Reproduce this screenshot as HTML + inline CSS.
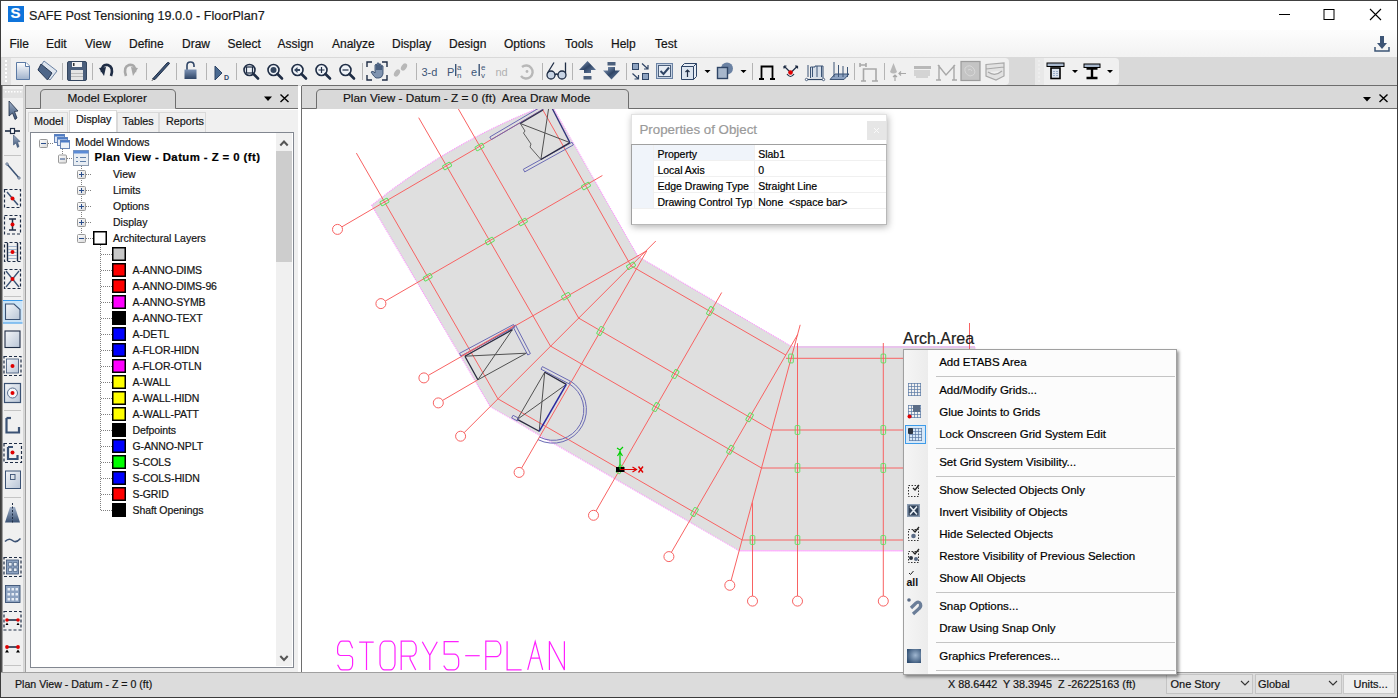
<!DOCTYPE html>
<html><head><meta charset="utf-8">
<style>
*{box-sizing:border-box}
html,body{margin:0;padding:0}
body{width:1398px;height:698px;position:relative;overflow:hidden;background:#d9d9d9;font-family:"Liberation Sans",sans-serif;color:#000}
.a{position:absolute}
.t{position:absolute;white-space:nowrap;line-height:1;-webkit-text-stroke:0.2px currentColor}
svg{position:absolute;overflow:visible}
</style></head><body>
<!-- title bar -->
<div class="a" style="left:0;top:0;width:1398px;height:30px;background:#fff"></div>
<div class="a" style="left:8px;top:6px;width:16px;height:16px;background:#0f74db"></div>
<div class="t" style="left:10.5px;top:5px;font-size:15px;font-weight:bold;color:#fff">S</div>
<div class="t" style="left:29px;top:10px;font-size:12.6px;color:#1a1a1a">SAFE Post Tensioning 19.0.0 - FloorPlan7</div>
<svg style="left:0;top:0" width="1398" height="30">
 <line x1="1279" y1="14.5" x2="1290" y2="14.5" stroke="#000" stroke-width="1"/>
 <rect x="1324" y="9.5" width="10" height="10" fill="none" stroke="#000"/>
 <path d="M1370 9 L1381 20 M1381 9 L1370 20" stroke="#000" stroke-width="1.1"/>
</svg>

<!-- menu bar -->
<div class="a" style="left:0;top:30px;width:1398px;height:27px;background:linear-gradient(#fdfdfd,#f2f2f2)"></div>
<div class="t" style="left:9.5px;top:38px;font-size:12px;color:#141414">File</div>
<div class="t" style="left:46px;top:38px;font-size:12px;color:#141414">Edit</div>
<div class="t" style="left:85px;top:38px;font-size:12px;color:#141414">View</div>
<div class="t" style="left:129px;top:38px;font-size:12px;color:#141414">Define</div>
<div class="t" style="left:182px;top:38px;font-size:12px;color:#141414">Draw</div>
<div class="t" style="left:227.5px;top:38px;font-size:12px;color:#141414">Select</div>
<div class="t" style="left:277.5px;top:38px;font-size:12px;color:#141414">Assign</div>
<div class="t" style="left:332px;top:38px;font-size:12px;color:#141414">Analyze</div>
<div class="t" style="left:392px;top:38px;font-size:12px;color:#141414">Display</div>
<div class="t" style="left:449px;top:38px;font-size:12px;color:#141414">Design</div>
<div class="t" style="left:504px;top:38px;font-size:12px;color:#141414">Options</div>
<div class="t" style="left:565px;top:38px;font-size:12px;color:#141414">Tools</div>
<div class="t" style="left:611px;top:38px;font-size:12px;color:#141414">Help</div>
<div class="t" style="left:655px;top:38px;font-size:12px;color:#141414">Test</div>
<svg style="left:0;top:0" width="1398" height="60">
 <path d="M1380 36 h4 v7 h3 l-5 6 l-5 -6 h3z" fill="#3d5576"/>
 <path d="M1375 47 v4 h14 v-4" fill="none" stroke="#3d5576" stroke-width="1.5"/>
</svg>

<!-- toolbar strip -->
<div class="a" style="left:0;top:58px;width:1398px;height:28px;background:#d9d9d9"></div>
<div class="a" style="left:2px;top:58px;width:1007px;height:27px;background:#f0f0f0;border-radius:0 4px 4px 0"></div>
<div class="a" style="left:1035px;top:58px;width:84px;height:27px;background:#f0f0f0;border-radius:0 4px 4px 0"></div>


<!-- left vertical toolbar -->
<div class="a" style="left:2px;top:86px;width:22px;height:586px;background:#f0f0f0"></div>
<!-- model explorer panel -->
<div class="a" style="left:25px;top:85px;width:273px;height:587px;background:#f0f0f0;border-left:1px solid #a0a0a0;border-top:1px solid #707070"></div>
<div class="a" style="left:26px;top:86px;width:272px;height:23px;background:#d9d9d9"></div><div class="a" style="left:26px;top:109px;width:272px;height:1px;background:#fff"></div>
<svg style="left:0;top:0" width="300" height="120">
 <path d="M26 108.5 H40.5 V94 Q40.5 89.5 45 89.5 H171 Q175.5 89.5 175.5 94 V108.5 H298" fill="#d9d9d9" stroke="#6e6e6e" stroke-width="1"/>
 <path d="M264 96.5 h8 l-4 4.5z" fill="#000"/>
 <path d="M280.5 94.5 l8 7.5 M288.5 94.5 l-8 7.5" stroke="#000" stroke-width="1.4"/>
</svg>
<div class="t" style="left:67.5px;top:93px;font-size:11.8px;color:#141414">Model Explorer</div>
<!-- subtabs -->
<div class="a" style="left:28px;top:112px;width:40px;height:20px;background:#f0f0f0;border:1px solid #d9d9d9;border-bottom:none"></div>
<div class="a" style="left:117px;top:112px;width:42px;height:20px;background:#f0f0f0;border:1px solid #d9d9d9;border-bottom:none"></div>
<div class="a" style="left:159px;top:112px;width:47px;height:20px;background:#f0f0f0;border:1px solid #d9d9d9;border-bottom:none"></div>
<div class="a" style="left:68.5px;top:110px;width:48.5px;height:22px;background:#fff;border:1px solid #d9d9d9;border-bottom:none"></div>
<div class="t" style="left:34px;top:115.5px;font-size:10.8px;color:#141414">Model</div>
<div class="t" style="left:76px;top:114px;font-size:10.8px;color:#141414">Display</div>
<div class="t" style="left:122.5px;top:115.5px;font-size:10.8px;color:#141414">Tables</div>
<div class="t" style="left:166px;top:115.5px;font-size:10.8px;color:#141414">Reports</div>
<!-- tree box -->
<div class="a" style="left:30px;top:132px;width:264px;height:536px;background:#fff;border:1px solid #828790"></div>
<div class="a" style="left:276px;top:133px;width:16px;height:533px;background:#f0f0f0"></div>
<div class="a" style="left:276px;top:151px;width:15.5px;height:111px;background:#cdcdcd"></div>
<svg style="left:0;top:0" width="300" height="700">
 <path d="M280.3 145.5 l3.7 -4 l3.7 4" fill="none" stroke="#555" stroke-width="2"/>
 <path d="M280.3 656 l3.7 4 l3.7 -4" fill="none" stroke="#555" stroke-width="2"/>
</svg>
<!-- plan view frame -->
<div class="a" style="left:298px;top:86px;width:3px;height:586px;background:#fff"></div>
<div class="a" style="left:301px;top:86px;width:1px;height:586px;background:#6e6e6e"></div>
<div class="a" style="left:302px;top:86px;width:1095px;height:23px;background:#d9d9d9"></div>
<div class="a" style="left:302px;top:109px;width:1095px;height:563px;background:#fff"></div>
<svg style="left:0;top:0" width="1398" height="120">
 <path d="M302 108.5 H316.5 V94 Q316.5 89.5 321 89.5 H624 Q628.5 89.5 628.5 94 V108.5 H1397" fill="#d9d9d9" stroke="#6e6e6e" stroke-width="1"/>
 <line x1="302" y1="85.5" x2="1397" y2="85.5" stroke="#6e6e6e"/>
 <path d="M1363 97 h8 l-4 4.5z" fill="#000"/>
 <path d="M1379.5 94.5 l8 7.5 M1387.5 94.5 l-8 7.5" stroke="#000" stroke-width="1.4"/>
</svg>
<div class="t" style="left:343px;top:93px;font-size:11.8px;color:#141414">Plan View - Datum - Z = 0 (ft)&nbsp; Area Draw Mode</div>

<!-- status bar -->
<div class="a" style="left:1px;top:672px;width:1396px;height:25px;background:#dcdcdc;border-top:1px solid #a0a0a0"></div>
<div class="t" style="left:15px;top:679px;font-size:10.6px;color:#141414">Plan View - Datum - Z = 0 (ft)</div>
<div class="t" style="left:948px;top:679px;font-size:10.8px;color:#141414">X 88.6442&nbsp; Y 38.3945&nbsp; Z -26225163 (ft)</div>
<div class="a" style="left:1166px;top:674px;width:87px;height:20px;background:#e1e1e1;border:1px solid #c4c4c4"></div>
<div class="a" style="left:1254.5px;top:674px;width:87px;height:20px;background:#e1e1e1;border:1px solid #c4c4c4"></div>
<div class="a" style="left:1343px;top:674px;width:52px;height:20px;background:#efefef;border:1px solid #c8c8c8"></div>
<div class="t" style="left:1170.5px;top:679px;font-size:11px;color:#141414">One Story</div>
<div class="t" style="left:1258px;top:679px;font-size:11px;color:#141414">Global</div>
<div class="t" style="left:1353.5px;top:679px;font-size:11px;color:#141414">Units...</div>
<svg style="left:0;top:0" width="1398" height="698">
 <path d="M1241 681 l4 4 l4 -4" fill="none" stroke="#333" stroke-width="1.1"/>
 <path d="M1329 681 l4 4 l4 -4" fill="none" stroke="#333" stroke-width="1.1"/>
</svg>

<!-- window borders -->
<div class="a" style="left:0;top:0;width:1398px;height:1px;background:#404040"></div>
<div class="a" style="left:0;top:0;width:1px;height:698px;background:#3c3c3c"></div>
<div class="a" style="left:1397px;top:0;width:1px;height:698px;background:#3c3c3c"></div>
<div class="a" style="left:0;top:697px;width:1398px;height:1px;background:#3c3c3c"></div><svg style="left:0;top:0" width="300" height="700"><g stroke="#808080" stroke-width="1" stroke-dasharray="1 1" fill="none"><path d="M48 143.5 H54 M62.5 149 V154 M67 158.5 H73 M81.5 166 V234 M86 174.5 H92 M86 190.5 H92 M86 206.5 H92 M86 222.5 H92 M86 238.5 H93 M100.5 245 V510"/><path d="M101 254.5 H112"/><path d="M101 270.5 H112"/><path d="M101 286.5 H112"/><path d="M101 302.5 H112"/><path d="M101 318.5 H112"/><path d="M101 334.5 H112"/><path d="M101 350.5 H112"/><path d="M101 366.5 H112"/><path d="M101 382.5 H112"/><path d="M101 398.5 H112"/><path d="M101 414.5 H112"/><path d="M101 430.5 H112"/><path d="M101 446.5 H112"/><path d="M101 462.5 H112"/><path d="M101 478.5 H112"/><path d="M101 494.5 H112"/><path d="M101 510.5 H112"/></g><defs><linearGradient id="eg" x1="0" y1="0" x2="1" y2="1"><stop offset="0" stop-color="#ffffff"/><stop offset="1" stop-color="#d8d8d8"/></linearGradient></defs><rect x="39.5" y="139.5" width="8" height="8" fill="url(#eg)" stroke="#9a9a9a" rx="1"/><path d="M41 143.5 H46" stroke="#2b4e8c" stroke-width="1"/><rect x="58.5" y="155.0" width="8" height="8" fill="url(#eg)" stroke="#9a9a9a" rx="1"/><path d="M60 159.0 H65" stroke="#2b4e8c" stroke-width="1"/><rect x="77.5" y="170.5" width="8" height="8" fill="url(#eg)" stroke="#9a9a9a" rx="1"/><path d="M79 174.5 H84" stroke="#2b4e8c" stroke-width="1"/><path d="M81.5 172 V177" stroke="#2b4e8c" stroke-width="1"/><rect x="77.5" y="186.5" width="8" height="8" fill="url(#eg)" stroke="#9a9a9a" rx="1"/><path d="M79 190.5 H84" stroke="#2b4e8c" stroke-width="1"/><path d="M81.5 188 V193" stroke="#2b4e8c" stroke-width="1"/><rect x="77.5" y="202.5" width="8" height="8" fill="url(#eg)" stroke="#9a9a9a" rx="1"/><path d="M79 206.5 H84" stroke="#2b4e8c" stroke-width="1"/><path d="M81.5 204 V209" stroke="#2b4e8c" stroke-width="1"/><rect x="77.5" y="218.5" width="8" height="8" fill="url(#eg)" stroke="#9a9a9a" rx="1"/><path d="M79 222.5 H84" stroke="#2b4e8c" stroke-width="1"/><path d="M81.5 220 V225" stroke="#2b4e8c" stroke-width="1"/><rect x="77.5" y="234.5" width="8" height="8" fill="url(#eg)" stroke="#9a9a9a" rx="1"/><path d="M79 238.5 H84" stroke="#2b4e8c" stroke-width="1"/><rect x="54.5" y="134.5" width="10" height="8" fill="#dfe8f5" stroke="#6a86b5"/><rect x="54.5" y="134.5" width="10" height="2" fill="#4d7cc8"/><rect x="57.5" y="137.5" width="10" height="8" fill="#e6edf7" stroke="#6a86b5"/><rect x="57.5" y="137.5" width="10" height="2" fill="#4d7cc8"/><rect x="60.5" y="140.5" width="9" height="8" fill="#eef2f8" stroke="#6a86b5"/><rect x="60.5" y="140.5" width="9" height="2" fill="#4d7cc8"/><rect x="73.5" y="150.5" width="15" height="15" fill="#e8edf3" stroke="#8c9bb0"/><rect x="73.5" y="150.5" width="15" height="3" fill="#5b8bd6"/><path d="M76 157.5 h2 M80 157.5 h6 M76 161.5 h2 M80 161.5 h6" stroke="#5f7fa8" stroke-width="1.2"/><rect x="93.75" y="231.75" width="12.5" height="12.5" fill="#fff" stroke="#000" stroke-width="1.5"/><rect x="112.75" y="247.75" width="12.5" height="12.5" fill="#c8c8c8" stroke="#000" stroke-width="1.5"/><rect x="112.75" y="263.75" width="12.5" height="12.5" fill="#ff0000" stroke="#000" stroke-width="1.5"/><rect x="112.75" y="279.75" width="12.5" height="12.5" fill="#ff0000" stroke="#000" stroke-width="1.5"/><rect x="112.75" y="295.75" width="12.5" height="12.5" fill="#ff00ff" stroke="#000" stroke-width="1.5"/><rect x="112.75" y="311.75" width="12.5" height="12.5" fill="#000000" stroke="#000" stroke-width="1.5"/><rect x="112.75" y="327.75" width="12.5" height="12.5" fill="#0000ff" stroke="#000" stroke-width="1.5"/><rect x="112.75" y="343.75" width="12.5" height="12.5" fill="#0000ff" stroke="#000" stroke-width="1.5"/><rect x="112.75" y="359.75" width="12.5" height="12.5" fill="#ff00ff" stroke="#000" stroke-width="1.5"/><rect x="112.75" y="375.75" width="12.5" height="12.5" fill="#ffff00" stroke="#000" stroke-width="1.5"/><rect x="112.75" y="391.75" width="12.5" height="12.5" fill="#ffff00" stroke="#000" stroke-width="1.5"/><rect x="112.75" y="407.75" width="12.5" height="12.5" fill="#ffff00" stroke="#000" stroke-width="1.5"/><rect x="112.75" y="423.75" width="12.5" height="12.5" fill="#000000" stroke="#000" stroke-width="1.5"/><rect x="112.75" y="439.75" width="12.5" height="12.5" fill="#0000ff" stroke="#000" stroke-width="1.5"/><rect x="112.75" y="455.75" width="12.5" height="12.5" fill="#00ff00" stroke="#000" stroke-width="1.5"/><rect x="112.75" y="471.75" width="12.5" height="12.5" fill="#0000ff" stroke="#000" stroke-width="1.5"/><rect x="112.75" y="487.75" width="12.5" height="12.5" fill="#ff0000" stroke="#000" stroke-width="1.5"/><rect x="112.75" y="503.75" width="12.5" height="12.5" fill="#000000" stroke="#000" stroke-width="1.5"/></svg>
<div class="t" style="left:75.30px;top:136.91px;font-size:10.5px;color:#141414;">Model Windows</div>
<div class="t" style="left:94.60px;top:152.25px;font-size:11.4px;color:#000;font-weight:bold;letter-spacing:0.42px;">Plan View - Datum - Z = 0 (ft)</div>
<div class="t" style="left:113.00px;top:168.91px;font-size:10.5px;color:#141414;">View</div>
<div class="t" style="left:113.00px;top:184.91px;font-size:10.5px;color:#141414;">Limits</div>
<div class="t" style="left:113.00px;top:200.91px;font-size:10.5px;color:#141414;">Options</div>
<div class="t" style="left:113.00px;top:216.91px;font-size:10.5px;color:#141414;">Display</div>
<div class="t" style="left:113.00px;top:232.91px;font-size:10.5px;color:#141414;">Architectural Layers</div>
<div class="t" style="left:132.50px;top:264.91px;font-size:10.5px;color:#141414;letter-spacing:-0.1px;">A-ANNO-DIMS</div>
<div class="t" style="left:132.50px;top:280.91px;font-size:10.5px;color:#141414;letter-spacing:-0.1px;">A-ANNO-DIMS-96</div>
<div class="t" style="left:132.50px;top:296.91px;font-size:10.5px;color:#141414;letter-spacing:-0.1px;">A-ANNO-SYMB</div>
<div class="t" style="left:132.50px;top:312.91px;font-size:10.5px;color:#141414;letter-spacing:-0.1px;">A-ANNO-TEXT</div>
<div class="t" style="left:132.50px;top:328.91px;font-size:10.5px;color:#141414;letter-spacing:-0.1px;">A-DETL</div>
<div class="t" style="left:132.50px;top:344.91px;font-size:10.5px;color:#141414;letter-spacing:-0.1px;">A-FLOR-HIDN</div>
<div class="t" style="left:132.50px;top:360.91px;font-size:10.5px;color:#141414;letter-spacing:-0.1px;">A-FLOR-OTLN</div>
<div class="t" style="left:132.50px;top:376.91px;font-size:10.5px;color:#141414;letter-spacing:-0.1px;">A-WALL</div>
<div class="t" style="left:132.50px;top:392.91px;font-size:10.5px;color:#141414;letter-spacing:-0.1px;">A-WALL-HIDN</div>
<div class="t" style="left:132.50px;top:408.91px;font-size:10.5px;color:#141414;letter-spacing:-0.1px;">A-WALL-PATT</div>
<div class="t" style="left:132.50px;top:424.91px;font-size:10.5px;color:#141414;letter-spacing:-0.1px;">Defpoints</div>
<div class="t" style="left:132.50px;top:440.91px;font-size:10.5px;color:#141414;letter-spacing:-0.1px;">G-ANNO-NPLT</div>
<div class="t" style="left:132.50px;top:456.91px;font-size:10.5px;color:#141414;letter-spacing:-0.1px;">S-COLS</div>
<div class="t" style="left:132.50px;top:472.91px;font-size:10.5px;color:#141414;letter-spacing:-0.1px;">S-COLS-HIDN</div>
<div class="t" style="left:132.50px;top:488.91px;font-size:10.5px;color:#141414;letter-spacing:-0.1px;">S-GRID</div>
<div class="t" style="left:132.50px;top:504.91px;font-size:10.5px;color:#141414;letter-spacing:-0.1px;">Shaft Openings</div>
<svg style="left:0;top:0" width="1398" height="90"><defs>
<linearGradient id="gdoc" x1="0" y1="0" x2="0" y2="1"><stop offset="0" stop-color="#ffffff"/><stop offset="1" stop-color="#9fb2cc"/></linearGradient>
<linearGradient id="gblue" x1="0" y1="0" x2="0" y2="1"><stop offset="0" stop-color="#7d93b5"/><stop offset="1" stop-color="#2f4566"/></linearGradient>
<linearGradient id="garr" x1="0" y1="0" x2="1" y2="1"><stop offset="0" stop-color="#8da2c0"/><stop offset="0.5" stop-color="#2f4566"/><stop offset="1" stop-color="#6f86a8"/></linearGradient>
</defs><rect x="2" y="58" width="9" height="27" fill="#e2e2e2"/><rect x="5" y="60" width="2" height="2" fill="#fff"/><rect x="5" y="64" width="2" height="2" fill="#fff"/><rect x="5" y="68" width="2" height="2" fill="#fff"/><rect x="5" y="72" width="2" height="2" fill="#fff"/><rect x="5" y="76" width="2" height="2" fill="#fff"/><rect x="5" y="80" width="2" height="2" fill="#fff"/><line x1="62.5" y1="63" x2="62.5" y2="80" stroke="#b4b4b4"/><line x1="92.5" y1="63" x2="92.5" y2="80" stroke="#b4b4b4"/><line x1="146.5" y1="63" x2="146.5" y2="80" stroke="#b4b4b4"/><line x1="176.5" y1="63" x2="176.5" y2="80" stroke="#b4b4b4"/><line x1="206.5" y1="63" x2="206.5" y2="80" stroke="#b4b4b4"/><line x1="236.5" y1="63" x2="236.5" y2="80" stroke="#b4b4b4"/><line x1="362.5" y1="63" x2="362.5" y2="80" stroke="#b4b4b4"/><line x1="416.5" y1="63" x2="416.5" y2="80" stroke="#b4b4b4"/><line x1="542.5" y1="63" x2="542.5" y2="80" stroke="#b4b4b4"/><line x1="572.5" y1="63" x2="572.5" y2="80" stroke="#b4b4b4"/><line x1="626.5" y1="63" x2="626.5" y2="80" stroke="#b4b4b4"/><line x1="752.5" y1="63" x2="752.5" y2="80" stroke="#b4b4b4"/><line x1="854.5" y1="63" x2="854.5" y2="80" stroke="#b4b4b4"/><line x1="884.5" y1="63" x2="884.5" y2="80" stroke="#b4b4b4"/><path d="M16.5 62.5 H26 L29.5 66 V79.5 H16.5Z" fill="url(#gdoc)" stroke="#5b7aa5"/><path d="M25.5 62.5 V66.5 H29.5" fill="#fff" stroke="#5b7aa5"/><path d="M38 70 L44 61 L57 71 L50 80Z" fill="#dfe6ef" stroke="#6b82a3"/><path d="M38 70 L41 64 L52 73 L47.5 80Z" fill="#4e6688" stroke="#2a3a55"/><rect x="67.5" y="61.5" width="19" height="19" rx="1.5" fill="#4b5f7c" stroke="#34465f"/><rect x="72" y="62" width="10" height="5" fill="#f4f4f4"/><rect x="73" y="63" width="1.5" height="3" fill="#333"/><rect x="71" y="70" width="12" height="10" fill="#e4e4e4"/><path d="M71 73.5 h12 M71 76.5 h12" stroke="#bbb"/><path d="M102 72 Q101 64 108 65 Q114 67 111 76" fill="none" stroke="#1f2d45" stroke-width="2.6"/><path d="M99 68 L104 76 L106 67Z" fill="#1f2d45"/><path d="M135 72 Q136 64 129 65 Q123 67 126 76" fill="none" stroke="#a8a8a8" stroke-width="2.6"/><path d="M138 68 L133 76 L131 67Z" fill="#a8a8a8"/><path d="M152.5 79 L167 63 Q169 61.5 169.5 63.5 L155 79.5Z" fill="#3d5576" stroke="#1f2d45"/><path d="M153 79.5 l-1 1.2" stroke="#222"/><path d="M187 70 V65.5 Q187 62 190.5 62 Q194 62 194 65.5 V67" fill="none" stroke="#2f4566" stroke-width="1.6"/><rect x="184.5" y="69.5" width="12" height="9.5" fill="url(#gblue)"/><path d="M215 66 L222 73 L215 80Z" fill="#4a6a91" stroke="#2f4566"/><text x="224" y="80" font-size="7" font-family="Liberation Sans" font-weight="bold" fill="#2f4566">D</text><circle cx="249.5" cy="70" r="5.5" fill="#eef2f7" stroke="#1f2d45" stroke-width="1.6"/><path d="M253.5 74 L258.0 78.5" stroke="#1f2d45" stroke-width="2.6" stroke-linecap="round"/><rect x="246.5" y="67" width="6" height="6" fill="none" stroke="#1f2d45" stroke-width="1.2"/><circle cx="273.5" cy="70" r="5.5" fill="#eef2f7" stroke="#1f2d45" stroke-width="1.6"/><path d="M277.5 74 L282.0 78.5" stroke="#1f2d45" stroke-width="2.6" stroke-linecap="round"/><circle cx="273.5" cy="70" r="3" fill="#34465f"/><circle cx="297.5" cy="70" r="5.5" fill="#eef2f7" stroke="#1f2d45" stroke-width="1.6"/><path d="M301.5 74 L306.0 78.5" stroke="#1f2d45" stroke-width="2.6" stroke-linecap="round"/><path d="M294 70 L297.5 67 V73Z M296 69 h4 v2 h-4z" fill="#34465f"/><circle cx="321.5" cy="70" r="5.5" fill="#eef2f7" stroke="#1f2d45" stroke-width="1.6"/><path d="M325.5 74 L330.0 78.5" stroke="#1f2d45" stroke-width="2.6" stroke-linecap="round"/><path d="M318.5 70 h6 M321.5 67 v6" stroke="#1f2d45" stroke-width="1.2"/><circle cx="345.5" cy="70" r="5.5" fill="#eef2f7" stroke="#1f2d45" stroke-width="1.6"/><path d="M349.5 74 L354.0 78.5" stroke="#1f2d45" stroke-width="2.6" stroke-linecap="round"/><path d="M342.5 70 h6" stroke="#1f2d45" stroke-width="1.2"/><path d="M367 67 V62 H372 M382 62 H387 V67 M387 75 V80 H382 M372 80 H367 V75" fill="none" stroke="#1f2d45" stroke-width="1.4"/><path d="M371 72 Q373 70 375 73 V65 Q376 63.5 377 65 V70 V63.5 Q378 62 379 63.5 V70 V64.5 Q380 63 381 64.5 V70 V66 Q382 65 383 66 V74 Q382 78 379 78 H376 Q374 77 371 72Z" fill="#8094b0" stroke="#2f4566" stroke-width="0.8"/><ellipse cx="397" cy="73" rx="2.5" ry="4" transform="rotate(35 397 73)" fill="#b8b8b8"/><ellipse cx="404" cy="67" rx="2.5" ry="4" transform="rotate(35 404 67)" fill="#b8b8b8"/><text x="421.5" y="76" font-size="11" font-family="Liberation Sans" fill="#3d5576">3-d</text><text x="447" y="76" font-size="11" font-family="Liberation Sans" fill="#3d5576">P</text><rect x="455" y="64" width="1.4" height="12" fill="#3d5576"/><text x="457" y="70" font-size="8" font-family="Liberation Sans" fill="#3d5576">a</text><text x="457" y="78" font-size="8" font-family="Liberation Sans" fill="#3d5576">n</text><text x="471" y="76" font-size="11" font-family="Liberation Sans" fill="#3d5576">e</text><rect x="478.5" y="64" width="1.4" height="12" fill="#3d5576"/><text x="481" y="70" font-size="8" font-family="Liberation Sans" fill="#3d5576">e</text><text x="481" y="78" font-size="8" font-family="Liberation Sans" fill="#3d5576">v</text><text x="495.5" y="76" font-size="11" font-family="Liberation Sans" fill="#b0b0b0">nd</text><path d="M522 67 A6.5 6.5 0 1 1 521 76" fill="none" stroke="#b8b8b8" stroke-width="2.4"/><circle cx="527" cy="71.5" r="1.4" fill="#b8b8b8"/><circle cx="551" cy="75" r="4" fill="#c8d4e4" stroke="#1f2d45" stroke-width="1.3"/><circle cx="562" cy="75" r="4" fill="#c8d4e4" stroke="#1f2d45" stroke-width="1.3"/><path d="M555 75 Q556.5 73 558 75 M547.5 73 L554 62.5 M565.5 73 V62.5" fill="none" stroke="#1f2d45" stroke-width="1.3"/><path d="M587.5 61 L596 70 H591 V73 H584 V70 H579Z" fill="url(#garr)"/><rect x="583.5" y="76" width="8" height="3.5" fill="#4b5f7c"/><rect x="607.5" y="62" width="8" height="3.5" fill="#4b5f7c"/><path d="M611.5 79.5 L603 70.5 H608 V67 H615 V70.5 H620Z" fill="url(#garr)"/><rect x="632.5" y="63.5" width="6" height="6" fill="#8da2c0" stroke="#2f4566"/><rect x="642.5" y="73.5" width="6" height="6" fill="#8da2c0" stroke="#2f4566"/><path d="M642 63.5 L648 69 M648 65 V69 H644 M632.5 73.5 L638.5 79 M634.5 79 H638.5 V75" fill="none" stroke="#2f4566" stroke-width="1.2"/><rect x="656.5" y="63.5" width="16" height="15" fill="#c6d3e4" stroke="#6b82a3"/><rect x="658.5" y="65.5" width="12" height="11" fill="#e7edf5" stroke="#4b5f7c"/><path d="M660.5 71 L663.5 74 L669 67.5" fill="none" stroke="#2f4566" stroke-width="2"/><path d="M681.5 66.5 L684.5 63.5 H696.5 V76.5 L693.5 79.5 H681.5Z" fill="#e7edf5" stroke="#2f4566"/><path d="M681.5 66.5 H693.5 V79.5 M693.5 66.5 L696.5 63.5" fill="none" stroke="#2f4566"/><rect x="682" y="67" width="11" height="12" fill="#dde5ef"/><path d="M687.5 77 V70 M685.5 72 L687.5 70 L689.5 72" fill="none" stroke="#1f2d45" stroke-width="1.2"/><path d="M704.5 70 h6 l-3 3z M740.5 70 h6 l-3 3z" fill="#000"/><circle cx="727" cy="68.5" r="6" fill="#6b82a3"/><rect x="717.5" y="67.5" width="10" height="11" fill="#a7b7cc" stroke="#2f4566" stroke-width="1.4"/><path d="M761.5 79 V66.5 H772.5 V79 M759 79 H764 M770 79 H775" fill="none" stroke="#000" stroke-width="1.8"/><path d="M784 66 L790.5 72.5 M797.5 66 L791 72.5 M784 66 h2.5 M784 66 v2.5 M797.5 66 h-2.5 M797.5 66 v2.5" stroke="#1f2d45" stroke-width="1.2" fill="none"/><path d="M787 74 Q790.5 79 794 74" fill="none" stroke="#1f2d45" stroke-width="1.2"/><circle cx="790.5" cy="72.5" r="2.3" fill="#e00000"/><path d="M806.5 79.5 H824" stroke="#2f4566" stroke-width="1.2"/><circle cx="806.5" cy="79.5" r="1.2" fill="#fff" stroke="#2f4566" stroke-width="0.8"/><circle cx="823.5" cy="79.5" r="1.2" fill="#fff" stroke="#2f4566" stroke-width="0.8"/><path d="M810.5 78 V67 H815 V66 H823 V78" fill="#d8e0ea" stroke="#3d5576"/><path d="M808 65 V77 M812.5 67 V77 M817 66 V77 M821.5 66 V77" stroke="#3d5576" stroke-width="1"/><path d="M830 79.5 L835 74 H849 L844 79.5Z" fill="#8da2c0" stroke="#3d5576"/><path d="M834 62 V77 M838.5 65 V77 M843 66 V77 M847.5 67 V77" stroke="#3d5576" stroke-width="1"/><path d="M861 81 H866 M872 81 H878 M863.5 81 V69 H876 V81 M860 63 V67 M860 65 H866 M866 63 V67" fill="none" stroke="#a8a8a8" stroke-width="1.6"/><path d="M893.5 63 L897 72 Q893.5 75 890 72Z" fill="#b8b8b8"/><path d="M895 81 V75 M893 77 L895 75 L897 77 M906 73.5 H899 M901 71.5 L899 73.5 L901 75.5" fill="none" stroke="#a8a8a8" stroke-width="1.2"/><rect x="914" y="66" width="17" height="3" fill="#b8b8b8"/><path d="M915 70 V76 M917 70 V78 M919 70 V78 M921 70 V78 M923 70 V78 M925 70 V78 M927 70 V78 M929 70 V76" stroke="#b8b8b8" stroke-width="1"/><path d="M938 65 L946 75 L955 65 M939 65 V80 M954 65 V80 M936 80 H941 M952 80 H957" fill="none" stroke="#a8a8a8" stroke-width="1.4"/><rect x="961" y="61.5" width="19" height="19" fill="#c4c4c4" stroke="#9c9c9c" stroke-width="1.2"/><path d="M965 68 Q970 63 974 69 Q977 75 970 76 Q964 74 965 68Z M968 70 Q971 68 972 71" fill="none" stroke="#d8d8d8" stroke-width="1"/><path d="M986 64.5 L1004 63 V76 L996 80 L986 76Z M986 69 L1004 67 M988 72 Q995 77 1002 71" fill="#e2e2e2" stroke="#a8a8a8" stroke-width="1.2"/><rect x="1038" y="60" width="2" height="2" fill="#fff"/><rect x="1038" y="64" width="2" height="2" fill="#fff"/><rect x="1038" y="68" width="2" height="2" fill="#fff"/><rect x="1038" y="72" width="2" height="2" fill="#fff"/><rect x="1038" y="76" width="2" height="2" fill="#fff"/><rect x="1038" y="80" width="2" height="2" fill="#fff"/><rect x="1035" y="58" width="9" height="27" fill="#e2e2e2" opacity="0.6"/><rect x="1047" y="63" width="17" height="3.5" fill="#a7b7cc" stroke="#000" stroke-width="1"/><rect x="1051" y="68" width="9" height="10.5" fill="#dce4ee" stroke="#000" stroke-width="1.6"/><path d="M1054 71 v5 M1057 71 v5" stroke="#5b7aa5" stroke-dasharray="1 1"/><path d="M1072 70 h6 l-3 3z M1107 70 h6 l-3 3z" fill="#000"/><rect x="1084" y="64" width="16" height="3.5" fill="#a7b7cc" stroke="#000"/><path d="M1092 68 V78 M1086.5 68.5 H1097.5 M1086.5 78 H1097.5" stroke="#000" stroke-width="2.4"/></svg>
<svg style="left:0;top:0" width="30" height="698"><defs><linearGradient id="lg1" x1="0" y1="0" x2="1" y2="1"><stop offset="0" stop-color="#f4f6f9"/><stop offset="1" stop-color="#b9c5d6"/></linearGradient>
<linearGradient id="lg2" x1="0" y1="0" x2="0" y2="1"><stop offset="0" stop-color="#9fb0c8"/><stop offset="1" stop-color="#3b5274"/></linearGradient></defs><rect x="1" y="85" width="1.5" height="587" fill="#505050"/><line x1="2" y1="85.5" x2="23" y2="85.5" stroke="#6e6e6e"/><rect x="23" y="86" width="1" height="586" fill="#d4d4d4"/><rect x="3" y="89" width="20" height="9" fill="#e2e2e2"/><rect x="5" y="91" width="1.5" height="1.5" fill="#fff"/><rect x="8" y="91" width="1.5" height="1.5" fill="#fff"/><rect x="11" y="91" width="1.5" height="1.5" fill="#fff"/><rect x="14" y="91" width="1.5" height="1.5" fill="#fff"/><rect x="17" y="91" width="1.5" height="1.5" fill="#fff"/><rect x="20" y="91" width="1.5" height="1.5" fill="#fff"/><line x1="4" y1="155.5" x2="21" y2="155.5" stroke="#c4c4c4"/><line x1="4" y1="296.5" x2="21" y2="296.5" stroke="#c4c4c4"/><line x1="4" y1="410.5" x2="21" y2="410.5" stroke="#c4c4c4"/><line x1="4" y1="497.5" x2="21" y2="497.5" stroke="#c4c4c4"/><line x1="4" y1="665.5" x2="21" y2="665.5" stroke="#c4c4c4"/><path d="M9 101 L18 111 L14.5 111.5 L17 118 L15 119.5 L12.5 113 L9 116Z" fill="url(#lg2)" stroke="#1f2d45" stroke-width="0.8"/><path d="M5 131 H20" stroke="#1f2d45" stroke-width="1.6"/><rect x="10.5" y="128.5" width="4" height="5" fill="#fff" stroke="#1f2d45" stroke-width="1.2"/><path d="M13.5 135 L20 141.5 L17.5 142 L19 146.5 L17.5 147.5 L16 143 L13.5 145Z" fill="url(#lg2)" stroke="#3b5274" stroke-width="0.6"/><path d="M7 164 L19 178" stroke="#3b5274" stroke-width="1.5"/><circle cx="7" cy="164" r="1.2" fill="#d0d8e4" stroke="#3b5274" stroke-width="0.7"/><circle cx="19" cy="178" r="1.2" fill="#d0d8e4" stroke="#3b5274" stroke-width="0.7"/><rect x="4.5" y="189.5" width="16.0" height="18.0" fill="none" stroke="#1f2d45" stroke-width="1.2" stroke-dasharray="3 2"/><path d="M7 192 L18 205" stroke="#3b5274" stroke-width="1.5"/><circle cx="12.5" cy="198.5" r="2" fill="#e00000"/><rect x="4.5" y="215.5" width="16.0" height="18.5" fill="none" stroke="#1f2d45" stroke-width="1.2" stroke-dasharray="3 2"/><path d="M9 219 H16 M12.5 219 V230 M9 230 H16" stroke="#1f2d45" stroke-width="1.5"/><circle cx="12.5" cy="224.5" r="2" fill="#e00000"/><rect x="4.5" y="242.5" width="16.0" height="19.0" fill="none" stroke="#1f2d45" stroke-width="1.2" stroke-dasharray="3 2"/><path d="M7.5 243 V261 M17.5 243 V261" stroke="#1f2d45" stroke-width="1.4"/><path d="M8 246.5 H17 M8 249.5 H17 M8 252.5 H17 M8 255.5 H17 M8 258.5 H17" stroke="#8da2c0" stroke-width="0.8"/><circle cx="12.5" cy="252" r="2" fill="#e00000"/><rect x="4.5" y="269.5" width="16.0" height="19.0" fill="none" stroke="#1f2d45" stroke-width="1.2" stroke-dasharray="3 2"/><path d="M6 271 L19 287 M19 271 L6 287" stroke="#3b5274" stroke-width="1.3"/><circle cx="12.5" cy="279" r="2" fill="#e00000"/><rect x="3" y="300" width="19.5" height="23.5" fill="#cce4f7"/><line x1="3" y1="300.5" x2="22.5" y2="300.5" stroke="#3d9be9"/><line x1="3" y1="323" x2="22.5" y2="323" stroke="#3d9be9"/><path d="M5.5 304 H14 L20 309.5 V319.5 H5.5Z" fill="url(#lg1)" stroke="#3b5274" stroke-width="1.1"/><rect x="5" y="331" width="15" height="16.5" fill="url(#lg1)" stroke="#1f2d45" stroke-width="1.1"/><rect x="4" y="356.5" width="17" height="19.0" fill="none" stroke="#1f2d45" stroke-width="1.2" stroke-dasharray="3 2"/><rect x="6.5" y="359" width="12" height="14" fill="url(#lg1)" stroke="#3b5274" stroke-width="0.8"/><circle cx="12.5" cy="366" r="2" fill="#e00000"/><rect x="4.5" y="383.5" width="16" height="19" fill="url(#lg1)" stroke="#3b5274" stroke-width="1.2"/><circle cx="12.5" cy="393" r="5" fill="#f4f6f9" stroke="#5a6f8f" stroke-width="1"/><circle cx="12.5" cy="393" r="2" fill="#e00000"/><path d="M6.5 418 V432.5 H19 V427" fill="none" stroke="#3b5274" stroke-width="2.2"/><path d="M6.5 418 H11" stroke="#3b5274" stroke-width="2.2"/><rect x="4" y="443.5" width="17.5" height="19.0" fill="none" stroke="#1f2d45" stroke-width="1.2" stroke-dasharray="3 2"/><path d="M8 447 V459 H17.5 V455 M8 447 H13" fill="none" stroke="#3b5274" stroke-width="2.2"/><circle cx="12.5" cy="452.5" r="2" fill="#e00000"/><rect x="5.5" y="471" width="15" height="17.5" fill="url(#lg1)" stroke="#3b5274" stroke-width="1"/><rect x="10.5" y="474.5" width="4.5" height="5" fill="none" stroke="#3b5274" stroke-width="0.9"/><path d="M10 507 H15 L20 522.5 H5Z" fill="url(#lg2)"/><path d="M12.5 503 V523" stroke="#1f2d45" stroke-dasharray="2 1.5" stroke-width="1"/><path d="M5 541.5 Q9 537.5 12.5 540.5 Q16 543.5 20.5 538.5" fill="none" stroke="#3b5274" stroke-width="1.6"/><rect x="4" y="557.5" width="17" height="19.0" fill="none" stroke="#1f2d45" stroke-width="1.2" stroke-dasharray="3 2"/><rect x="6.5" y="560" width="12" height="14" fill="#8da2c0" stroke="#3b5274" stroke-width="0.8"/><path d="M8.5 562.5 h3.5 v3.5 h-3.5z M13.5 562.5 h3.5 v3.5 h-3.5z M8.5 568 h3.5 v3.5 h-3.5z M13.5 568 h3.5 v3.5 h-3.5z" fill="#e7edf5" stroke="#3b5274" stroke-width="0.6"/><rect x="5.5" y="585.5" width="14.5" height="17" fill="#8da2c0" stroke="#3b5274" stroke-width="0.9"/><rect x="7.5" y="588" width="2.5" height="2.5" fill="#e7edf5"/><rect x="11.5" y="588" width="2.5" height="2.5" fill="#e7edf5"/><rect x="15.5" y="588" width="2.5" height="2.5" fill="#e7edf5"/><rect x="7.5" y="593" width="2.5" height="2.5" fill="#e7edf5"/><rect x="11.5" y="593" width="2.5" height="2.5" fill="#e7edf5"/><rect x="15.5" y="593" width="2.5" height="2.5" fill="#e7edf5"/><rect x="7.5" y="598" width="2.5" height="2.5" fill="#e7edf5"/><rect x="11.5" y="598" width="2.5" height="2.5" fill="#e7edf5"/><rect x="15.5" y="598" width="2.5" height="2.5" fill="#e7edf5"/><rect x="4" y="611.5" width="17" height="18.5" fill="none" stroke="#1f2d45" stroke-width="1.2" stroke-dasharray="3 2"/><path d="M7 620 H18" stroke="#1f2d45" stroke-width="1.6"/><circle cx="7" cy="620" r="1.8" fill="#e00000"/><circle cx="18" cy="620" r="1.8" fill="#e00000"/><path d="M5.5 625 L7 622.5 L8.5 625Z M16.5 625 L18 622.5 L19.5 625Z" fill="#000"/><path d="M7 647 H18" stroke="#1f2d45" stroke-width="1.6"/><circle cx="7" cy="647" r="1.9" fill="#e00000"/><circle cx="18" cy="647" r="1.9" fill="#e00000"/><path d="M5 652.5 L7 649.5 L9 652.5Z M16 652.5 L18 649.5 L20 652.5Z" fill="#000"/></svg>
<svg style="left:0;top:0" width="1398" height="698"><defs>
<clipPath id="cv"><rect x="302" y="109" width="1095" height="563"/></clipPath>
<pattern id="hatch" width="7" height="7" patternUnits="userSpaceOnUse" patternTransform="rotate(-33)"><rect width="7" height="7" fill="#dedede"/><line x1="0" y1="0.5" x2="7" y2="0.5" stroke="#e6e6e6" stroke-width="1"/></pattern>
</defs><g clip-path="url(#cv)"><polygon points="371.7,205.3 380.4,198.5 389.0,191.8 397.7,185.4 406.4,179.3 415.0,173.3 423.7,167.6 432.4,162.0 441.0,156.6 449.7,151.5 458.4,146.5 467.0,141.7 475.7,137.0 484.3,132.6 493.0,128.3 501.7,124.1 510.3,120.1 519.0,116.3 527.7,112.6 536.3,109.1 545.0,105.7 548.7,100 637.8,256.3 791.6,346.5 975,346.5 975,550.8 739.2,550.8 490.3,406.7" fill="#dfdfdf" stroke="#ff8cff" stroke-width="1.1" stroke-dasharray="1 1"/><line x1="797" y1="347" x2="975" y2="347" stroke="#e8c4ec" stroke-width="2"/><line x1="739" y1="550.8" x2="975" y2="550.8" stroke="#ffb0ff" stroke-width="1"/><path d="M356.4 153.1 L497.9 398.8 M418.7 117.7 L550.4 346 M458.4 109 L578.7 318.1 M542.3 109 L631 265.8 M341.82 226.88 L543.6 109 M385.23 301.1 L602.4 175.5 M428.24 375.42 L646.8 250.8 M442.62 400.38 L477.9 379.8 M464.14 432.66 L655.8 241 M521.6 468.07 L646.8 250.8 M595.99 510.97 L721.7 292.5 M671.41 552.27 L797.7 334.5 M731.1 580.47 L800.2 324.8 M631 265.8 L786 355.2 M578.7 318.1 L771.6 430 M550.4 346 L761.5 468 M497.9 398.8 L742.2 540 M797.5 596.1 L797.5 343.2 M883.3 596.1 L883.3 343 M752.5 596.1 L752.5 502.4 M969.5 323 L969.5 352 M786 358.3 L905 358.3 M771.6 430 L905 430 M761.5 468 L905 468 M742.2 540 L905 540" stroke="#f86262" stroke-width="1" fill="none"/><circle cx="337.5" cy="229.4" r="5" fill="#fff" stroke="#f86262" stroke-width="1"/><circle cx="380.9" cy="303.6" r="5" fill="#fff" stroke="#f86262" stroke-width="1"/><circle cx="423.9" cy="377.9" r="5" fill="#fff" stroke="#f86262" stroke-width="1"/><circle cx="438.3" cy="402.9" r="5" fill="#fff" stroke="#f86262" stroke-width="1"/><circle cx="460.6" cy="436.2" r="5" fill="#fff" stroke="#f86262" stroke-width="1"/><circle cx="519.1" cy="472.4" r="5" fill="#fff" stroke="#f86262" stroke-width="1"/><circle cx="593.5" cy="515.3" r="5" fill="#fff" stroke="#f86262" stroke-width="1"/><circle cx="668.9" cy="556.6" r="5" fill="#fff" stroke="#f86262" stroke-width="1"/><circle cx="729.8" cy="585.3" r="5" fill="#fff" stroke="#f86262" stroke-width="1"/><circle cx="752.5" cy="601.1" r="5" fill="#fff" stroke="#f86262" stroke-width="1"/><circle cx="797.5" cy="601.1" r="5" fill="#fff" stroke="#f86262" stroke-width="1"/><circle cx="883.3" cy="601.1" r="5" fill="#fff" stroke="#f86262" stroke-width="1"/><rect x="380.25" y="199.75" width="8.5" height="4.5" rx="0.9" fill="none" stroke="#58e058" stroke-width="0.9" transform="rotate(-30 384.5 202)"/><rect x="442.85" y="163.75" width="8.5" height="4.5" rx="0.9" fill="none" stroke="#58e058" stroke-width="0.9" transform="rotate(-30 447.1 166)"/><rect x="475.25" y="144.85" width="8.5" height="4.5" rx="0.9" fill="none" stroke="#58e058" stroke-width="0.9" transform="rotate(-30 479.5 147.1)"/><rect x="423.45" y="275.05" width="8.5" height="4.5" rx="0.9" fill="none" stroke="#58e058" stroke-width="0.9" transform="rotate(-30 427.7 277.3)"/><rect x="485.55" y="238.65" width="8.5" height="4.5" rx="0.9" fill="none" stroke="#58e058" stroke-width="0.9" transform="rotate(-30 489.8 240.9)"/><rect x="518.65" y="219.65" width="8.5" height="4.5" rx="0.9" fill="none" stroke="#58e058" stroke-width="0.9" transform="rotate(-30 522.9 221.9)"/><rect x="581.75" y="183.75" width="8.5" height="4.5" rx="0.9" fill="none" stroke="#58e058" stroke-width="0.9" transform="rotate(-30 586 186)"/><rect x="561.85" y="293.95" width="8.5" height="4.5" rx="0.9" fill="none" stroke="#58e058" stroke-width="0.9" transform="rotate(-30 566.1 296.2)"/><rect x="626.75" y="263.55" width="8.5" height="4.5" rx="0.9" fill="none" stroke="#58e058" stroke-width="0.9" transform="rotate(-30 631 265.8)"/><rect x="596.25" y="328.65" width="8.5" height="4.5" rx="0.9" fill="none" stroke="#58e058" stroke-width="0.9" transform="rotate(-60 600.5 330.9)"/><rect x="706.05" y="308.85" width="8.5" height="4.5" rx="0.9" fill="none" stroke="#58e058" stroke-width="0.9" transform="rotate(-60 710.3 311.1)"/><rect x="671.05" y="371.85" width="8.5" height="4.5" rx="0.9" fill="none" stroke="#58e058" stroke-width="0.9" transform="rotate(-60 675.3 374.1)"/><rect x="651.55" y="404.85" width="8.5" height="4.5" rx="0.9" fill="none" stroke="#58e058" stroke-width="0.9" transform="rotate(-60 655.8 407.1)"/><rect x="745.35" y="415.05" width="8.5" height="4.5" rx="0.9" fill="none" stroke="#58e058" stroke-width="0.9" transform="rotate(-60 749.6 417.3)"/><rect x="726.15" y="447.55" width="8.5" height="4.5" rx="0.9" fill="none" stroke="#58e058" stroke-width="0.9" transform="rotate(-60 730.4 449.8)"/><rect x="690.25" y="509.65" width="8.5" height="4.5" rx="0.9" fill="none" stroke="#58e058" stroke-width="0.9" transform="rotate(-60 694.5 511.9)"/><rect x="615.55" y="467.05" width="8.5" height="4.5" rx="0.9" fill="none" stroke="#58e058" stroke-width="0.9" transform="rotate(-60 619.8 469.3)"/><rect x="788.7" y="354.1" width="4.6" height="8.8" rx="0.9" fill="none" stroke="#58e058" stroke-width="0.9" transform="rotate(0 791 358.5)"/><rect x="881.1" y="354.1" width="4.6" height="8.8" rx="0.9" fill="none" stroke="#58e058" stroke-width="0.9" transform="rotate(0 883.4 358.5)"/><rect x="795.2" y="425.6" width="4.6" height="8.8" rx="0.9" fill="none" stroke="#58e058" stroke-width="0.9" transform="rotate(0 797.5 430)"/><rect x="881.0" y="425.6" width="4.6" height="8.8" rx="0.9" fill="none" stroke="#58e058" stroke-width="0.9" transform="rotate(0 883.3 430)"/><rect x="795.2" y="463.6" width="4.6" height="8.8" rx="0.9" fill="none" stroke="#58e058" stroke-width="0.9" transform="rotate(0 797.5 468)"/><rect x="881.0" y="463.6" width="4.6" height="8.8" rx="0.9" fill="none" stroke="#58e058" stroke-width="0.9" transform="rotate(0 883.3 468)"/><rect x="750.2" y="535.6" width="4.6" height="8.8" rx="0.9" fill="none" stroke="#58e058" stroke-width="0.9" transform="rotate(0 752.5 540)"/><rect x="795.2" y="535.6" width="4.6" height="8.8" rx="0.9" fill="none" stroke="#58e058" stroke-width="0.9" transform="rotate(0 797.5 540)"/><rect x="881.0" y="535.6" width="4.6" height="8.8" rx="0.9" fill="none" stroke="#58e058" stroke-width="0.9" transform="rotate(0 883.3 540)"/><path d="M491.4 139.6 L548.8 105.8 L547.2 103.2 L489.8 137.0Z" fill="none" stroke="#6a6ab4" stroke-width="1" stroke-linejoin="round"/><path d="M524.7 171.9 L573.4 144.9 L572.0 142.3 L523.3 169.3Z" fill="none" stroke="#6a6ab4" stroke-width="1" stroke-linejoin="round"/><path d="M520.3 123.5 L569.9 142.6 M540.9 159.5 L549.3 104" stroke="#505050" stroke-width="1" fill="none"/><path d="M520.3 123.5 L525 131 L523.5 133 L531 144 L530 147 L540.9 159.5" stroke="#606060" stroke-width="1" fill="none"/><path d="M540.9 159.5 L569.9 142.6" stroke="#2a2a40" stroke-width="1.3"/><path d="M552 108 L569.9 142.6" stroke="#30307a" stroke-width="1.3"/><path d="M520.3 123.5 L543 110" stroke="#30304a" stroke-width="1.2"/><path d="M460.9 356.0 L514.9 327.1 L513.5 324.5 L459.5 353.4Z" fill="none" stroke="#6a6ab4" stroke-width="1" stroke-linejoin="round"/><path d="M512.9 326.5 L527.8 355.0 L530.4 353.6 L515.5 325.1Z" fill="none" stroke="#6a6ab4" stroke-width="1" stroke-linejoin="round"/><path d="M464.9 356.2 L526.3 353.2 M512.4 329.6 L477.9 379.8 M477.9 379.8 L526.3 353.2" stroke="#505050" stroke-width="1" fill="none"/><path d="M464.9 356.2 L512.4 329.6 M464.9 356.2 L477.9 379.8" stroke="#2a2a40" stroke-width="1.3" fill="none"/><path d="M461.5 356 L514.6 325.5" stroke="#f86262" stroke-width="1"/><path d="M541.0 369.2 L569.0 383.8 L570.4 381.2 L542.4 366.6Z" fill="none" stroke="#6a6ab4" stroke-width="1" stroke-linejoin="round"/><path d="M544.7 372.2 L539.2 431.3 M566.3 384.4 L517.3 419.4 M517.3 419.4 L544.7 372.2" stroke="#505050" stroke-width="1" fill="none"/><path d="M544.7 372.2 L566.3 384.4 M517.3 419.4 L539.2 431.3" stroke="#2a2a40" stroke-width="1.3" fill="none"/><path d="M566.3 384.4 L539.2 431.3" stroke="#2828a0" stroke-width="1.5"/><path d="M511.7 417.9 L517.3 420.9 L518.7 418.3 L513.1 415.3Z" fill="none" stroke="#6a6ab4" stroke-width="1" stroke-linejoin="round"/><path d="M569.0 383.7 A30.5 30.5 0 0 1 539.4 437.0" fill="none" stroke="#6a6ab4" stroke-width="1"/><path d="M570.6 381.2 A33.5 33.5 0 0 1 538.1 439.7" fill="none" stroke="#6a6ab4" stroke-width="1"/><rect x="616" y="467" width="8.5" height="5" fill="#000"/><path d="M620 469.5 V453 M617.5 456 L620 452 L622.5 456" stroke="#00d000" stroke-width="1.2" fill="none"/><path d="M617 448 L620 450 L623 447 M620 450 V452" stroke="#00d000" stroke-width="1.2" fill="none"/><path d="M620 469.5 H636 M632.5 467 L636.5 469.5 L632.5 472" stroke="#e00000" stroke-width="1.2" fill="none"/><path d="M638.5 466.5 L643 472.5 M643 466.5 L638.5 472.5" stroke="#e00000" stroke-width="1.4" fill="none"/></g><g fill="none" stroke="#ff20ff" stroke-width="1.2"><path transform="translate(337.6 641.2)" d="M15 7 L12.5 1 Q11.8 0 10.5 0 H4.5 Q3 0 2 1.2 L0.8 3.5 Q0 5 0 7 V11 Q0 12.5 1.2 13.5 L2.5 14.3 H12 L14 15.5 Q15 16.5 15 18 V23 Q15 25 14 26.5 L13 27.8 Q12 28.7 10.5 28.7 H4.5 Q3 28.7 2.3 27.7 L0 23.5"/><path transform="translate(359.2 641.2)" d="M0 1 H14.5 M7.3 1 V28.7"/><path transform="translate(380 641.2)" d="M4.5 0 H10.5 Q12 0 13 1.3 L14.2 3 Q15 4.5 15 6.5 V22 Q15 24 14.2 25.5 L13 27.4 Q12 28.7 10.5 28.7 H4.5 Q3 28.7 2 27.4 L0.8 25.5 Q0 24 0 22 V6.5 Q0 4.5 0.8 3 L2 1.3 Q3 0 4.5 0Z"/><path transform="translate(401.2 641.2)" d="M0 28.7 V0 H10.5 Q12 0 13 1.3 L14.2 3 Q15 4.5 15 6.5 V9 Q15 11 14.2 12.5 L13 14 Q12 15 10.5 15 H0 M9 15 Q8.5 16 9 18 L14.5 28.7"/><path transform="translate(422.3 641.2)" d="M0 0.5 L7.5 14 L15 0.5 M7.5 14 V28.7"/><path transform="translate(443.7 641.2)" d="M15 0.5 H0.5 V13 H10.5 Q12 13 13 14 L14.2 15.5 Q15 17 15 19 V22.5 Q15 24.5 14.2 26 L13 27.5 Q12 28.7 10.5 28.7 H4.5 Q3 28.7 2.2 27.7 L0 24.5"/><path transform="translate(465.2 641.2)" d="M0 14.5 H14.5"/><path transform="translate(485.8 641.2)" d="M0 28.7 V0 H10.5 Q12 0 13 1.3 L14.2 3 Q15 4.5 15 6.5 V9.5 Q15 11.5 14.2 13 L13 14.5 Q12 15.5 10.5 15.5 H0"/><path transform="translate(507.1 641.2)" d="M0 0 V28.7 H14.5"/><path transform="translate(527.7 641.2)" d="M0 28.7 L7.5 0.3 L15 28.7 M3 17 H12"/><path transform="translate(549.4 641.2)" d="M0 28.7 V0 L15 28.7 V0"/></g></svg>
<div class="a" style="left:631px;top:114px;width:256px;height:111px;background:#fff;border:1px solid #e2e2e2;box-shadow:1px 2px 7px rgba(0,0,0,0.3)"></div><div class="t" style="left:639.50px;top:122.74px;font-size:13.3px;color:#9a9a9a;">Properties of Object</div>
<div class="a" style="left:867px;top:121px;width:19px;height:19px;background:#e6e6e6"></div><svg style="left:0;top:0" width="900" height="240"><path d="M874 128 l5 5 M879 128 l-5 5" stroke="#fafafa" stroke-width="1"/></svg><div class="a" style="left:631px;top:144px;width:256px;height:81px;background:#fff;border-top:1px solid #a0a0a0;border-left:1px solid #a0a0a0;border-right:1px solid #b8b8b8;border-bottom:1px solid #b8b8b8"></div><div class="a" style="left:632px;top:145px;width:21px;height:64px;background:#f0f4fa"></div><div class="a" style="left:653px;top:145px;width:101px;height:15px;background:#f0f4fa"></div><svg style="left:0;top:0" width="900" height="240"><g stroke="#f0f0f0" stroke-width="1"><path d="M653 160.5 H886 M653 176.5 H886 M653 192.5 H886 M633 208.5 H886 M653.5 145 V209 M754.5 145 V209"/></g></svg><div class="t" style="left:657.40px;top:148.61px;font-size:10.5px;color:#000;">Property</div>
<div class="t" style="left:758.20px;top:148.61px;font-size:10.5px;color:#000;">Slab1</div>
<div class="t" style="left:657.40px;top:164.61px;font-size:10.5px;color:#000;">Local Axis</div>
<div class="t" style="left:758.20px;top:164.61px;font-size:10.5px;color:#000;">0</div>
<div class="t" style="left:657.40px;top:180.61px;font-size:10.5px;color:#000;">Edge Drawing Type</div>
<div class="t" style="left:758.20px;top:180.61px;font-size:10.5px;color:#000;">Straight Line</div>
<div class="t" style="left:657.40px;top:196.61px;font-size:10.5px;color:#000;">Drawing Control Typ</div>
<div class="t" style="left:758.20px;top:196.61px;font-size:10.5px;color:#000;">None&nbsp; &lt;space bar&gt;</div>
<div class="t" style="left:903.00px;top:331.16px;font-size:16px;color:#202020;">Arch.Area</div>
<div class="a" style="left:903px;top:349px;width:274px;height:326px;background:#fcfcfc;border:1px solid #a0a0a0;box-shadow:2px 2px 3px rgba(0,0,0,0.42)"></div><div class="a" style="left:904px;top:350px;width:24px;height:324px;background:linear-gradient(90deg,#f5f5f5,#ececec)"></div><div class="t" style="left:939.20px;top:356.97px;font-size:11.5px;color:#000;">Add ETABS Area</div>
<div class="t" style="left:939.20px;top:384.97px;font-size:11.5px;color:#000;">Add/Modify Grids...</div>
<div class="t" style="left:939.20px;top:406.97px;font-size:11.5px;color:#000;">Glue Joints to Grids</div>
<div class="t" style="left:939.20px;top:428.97px;font-size:11.5px;color:#000;">Lock Onscreen Grid System Edit</div>
<div class="t" style="left:939.20px;top:456.97px;font-size:11.5px;color:#000;">Set Grid System Visibility...</div>
<div class="t" style="left:939.20px;top:485.37px;font-size:11.5px;color:#000;">Show Selected Objects Only</div>
<div class="t" style="left:939.20px;top:506.97px;font-size:11.5px;color:#000;">Invert Visibility of Objects</div>
<div class="t" style="left:939.20px;top:528.97px;font-size:11.5px;color:#000;">Hide Selected Objects</div>
<div class="t" style="left:939.20px;top:550.97px;font-size:11.5px;color:#000;">Restore Visibility of Previous Selection</div>
<div class="t" style="left:939.20px;top:572.97px;font-size:11.5px;color:#000;">Show All Objects</div>
<div class="t" style="left:939.20px;top:600.97px;font-size:11.5px;color:#000;">Snap Options...</div>
<div class="t" style="left:939.20px;top:622.97px;font-size:11.5px;color:#000;">Draw Using Snap Only</div>
<div class="t" style="left:939.20px;top:650.97px;font-size:11.5px;color:#000;">Graphics Preferences...</div>
<svg style="left:0;top:0" width="1398" height="698"><line x1="936" y1="376.5" x2="1175" y2="376.5" stroke="#c4c4c4"/><line x1="936" y1="448.5" x2="1175" y2="448.5" stroke="#c4c4c4"/><line x1="936" y1="476.5" x2="1175" y2="476.5" stroke="#c4c4c4"/><line x1="936" y1="592.5" x2="1175" y2="592.5" stroke="#c4c4c4"/><line x1="936" y1="642.5" x2="1175" y2="642.5" stroke="#c4c4c4"/><line x1="936" y1="670.5" x2="1175" y2="670.5" stroke="#c4c4c4"/><line x1="908.5" y1="383" x2="908.5" y2="396" stroke="#5b7aa5" stroke-width="1" opacity="0.7"/><line x1="911.5" y1="383" x2="911.5" y2="396" stroke="#5b7aa5" stroke-width="1" opacity="0.7"/><line x1="914.5" y1="383" x2="914.5" y2="396" stroke="#5b7aa5" stroke-width="1" opacity="0.7"/><line x1="917.5" y1="383" x2="917.5" y2="396" stroke="#5b7aa5" stroke-width="1" opacity="0.7"/><line x1="920.5" y1="383" x2="920.5" y2="396" stroke="#5b7aa5" stroke-width="1" opacity="0.7"/><line x1="908" y1="383.5" x2="921" y2="383.5" stroke="#5b7aa5" stroke-width="1" opacity="0.7"/><line x1="908" y1="386.5" x2="921" y2="386.5" stroke="#5b7aa5" stroke-width="1" opacity="0.7"/><line x1="908" y1="389.5" x2="921" y2="389.5" stroke="#5b7aa5" stroke-width="1" opacity="0.7"/><line x1="908" y1="392.5" x2="921" y2="392.5" stroke="#5b7aa5" stroke-width="1" opacity="0.7"/><line x1="908" y1="395.5" x2="921" y2="395.5" stroke="#5b7aa5" stroke-width="1" opacity="0.7"/><line x1="908.5" y1="405" x2="908.5" y2="418" stroke="#5b7aa5" stroke-width="1" opacity="0.7"/><line x1="911.5" y1="405" x2="911.5" y2="418" stroke="#5b7aa5" stroke-width="1" opacity="0.7"/><line x1="914.5" y1="405" x2="914.5" y2="418" stroke="#5b7aa5" stroke-width="1" opacity="0.7"/><line x1="917.5" y1="405" x2="917.5" y2="418" stroke="#5b7aa5" stroke-width="1" opacity="0.7"/><line x1="920.5" y1="405" x2="920.5" y2="418" stroke="#5b7aa5" stroke-width="1" opacity="0.7"/><line x1="908" y1="405.5" x2="921" y2="405.5" stroke="#5b7aa5" stroke-width="1" opacity="0.7"/><line x1="908" y1="408.5" x2="921" y2="408.5" stroke="#5b7aa5" stroke-width="1" opacity="0.7"/><line x1="908" y1="411.5" x2="921" y2="411.5" stroke="#5b7aa5" stroke-width="1" opacity="0.7"/><line x1="908" y1="414.5" x2="921" y2="414.5" stroke="#5b7aa5" stroke-width="1" opacity="0.7"/><line x1="908" y1="417.5" x2="921" y2="417.5" stroke="#5b7aa5" stroke-width="1" opacity="0.7"/><rect x="913" y="405" width="7" height="7" fill="#5a6b85"/><circle cx="909.5" cy="416.5" r="2" fill="#e00000"/><rect x="905.5" y="425.5" width="20" height="18" fill="#d6e8f8" stroke="#3d9be9"/><line x1="909.5" y1="428" x2="909.5" y2="441" stroke="#5b7aa5" stroke-width="1" opacity="0.7"/><line x1="912.5" y1="428" x2="912.5" y2="441" stroke="#5b7aa5" stroke-width="1" opacity="0.7"/><line x1="915.5" y1="428" x2="915.5" y2="441" stroke="#5b7aa5" stroke-width="1" opacity="0.7"/><line x1="918.5" y1="428" x2="918.5" y2="441" stroke="#5b7aa5" stroke-width="1" opacity="0.7"/><line x1="921.5" y1="428" x2="921.5" y2="441" stroke="#5b7aa5" stroke-width="1" opacity="0.7"/><line x1="909" y1="428.5" x2="922" y2="428.5" stroke="#5b7aa5" stroke-width="1" opacity="0.7"/><line x1="909" y1="431.5" x2="922" y2="431.5" stroke="#5b7aa5" stroke-width="1" opacity="0.7"/><line x1="909" y1="434.5" x2="922" y2="434.5" stroke="#5b7aa5" stroke-width="1" opacity="0.7"/><line x1="909" y1="437.5" x2="922" y2="437.5" stroke="#5b7aa5" stroke-width="1" opacity="0.7"/><line x1="909" y1="440.5" x2="922" y2="440.5" stroke="#5b7aa5" stroke-width="1" opacity="0.7"/><rect x="908" y="428" width="5" height="6" rx="1" fill="#2c3440"/><rect x="908.5" y="485.5" width="10" height="11" fill="none" stroke="#333" stroke-dasharray="1.5 1.5"/><path d="M913 488 l2 2 l4 -5" fill="none" stroke="#222" stroke-width="1.3"/><rect x="907" y="504" width="13" height="13" fill="#8a9bb0"/><rect x="908.5" y="505.5" width="10" height="10" fill="#2c3e55"/><path d="M910 506.5 L913.5 510.5 L910 514.5 M917 506.5 L913.5 510.5 L917 514.5" fill="none" stroke="#e6ecf2" stroke-width="1.6"/><rect x="908.5" y="529.5" width="10" height="11" fill="none" stroke="#333" stroke-dasharray="1.5 1.5"/><path d="M913 530 l2 2 l4 -5" fill="none" stroke="#222" stroke-width="1.3"/><circle cx="913.5" cy="536" r="2.3" fill="#5a6b85"/><rect x="908.5" y="551.5" width="10" height="11" fill="none" stroke="#333" stroke-dasharray="1.5 1.5"/><path d="M913 552 l2 2 l4 -5" fill="none" stroke="#222" stroke-width="1.3"/><circle cx="911" cy="558" r="2" fill="#2c3440"/><circle cx="916" cy="559" r="2" fill="#5a6b85"/><path d="M909 573 l1.5 1.5 l3 -3.5" fill="none" stroke="#222" stroke-width="1"/><text x="906.5" y="585.5" font-size="10.5" font-weight="bold" font-family="Liberation Sans" fill="#111">all</text><path d="M911 608 L916 603 Q919 601 920.5 604 Q921.5 607 918 609.5 L913 614" fill="none" stroke="#6a7d98" stroke-width="3.2"/><circle cx="909" cy="600" r="1.8" fill="#5a6b85"/><defs><radialGradient id="gp" cx="0.6" cy="0.45" r="0.7"><stop offset="0" stop-color="#9fb6d0"/><stop offset="1" stop-color="#2c4a6e"/></radialGradient></defs><rect x="907" y="649" width="14" height="14" fill="url(#gp)"/></svg>
</body></html>
